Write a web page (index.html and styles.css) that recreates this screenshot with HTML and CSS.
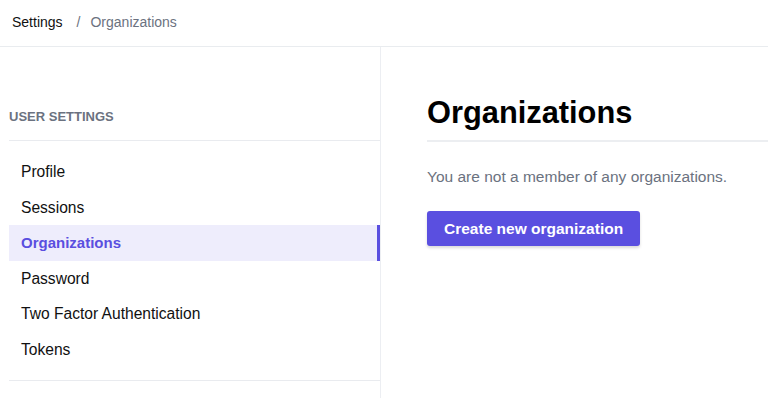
FILE: index.html
```html
<!DOCTYPE html>
<html lang="en">
<head>
  <meta charset="UTF-8">
  <meta name="viewport" content="width=device-width, initial-scale=1.0">
  <title>Organizations - Settings</title>
  <link rel="stylesheet" href="styles.css">
</head>
<body>
  <header class="barra">
    <span class="miga-actual">Settings</span>
    <span class="miga-sep">/</span>
    <span class="miga">Organizations</span>
  </header>

  <div class="contenido">
    <aside class="lateral">
      <h3 class="lateral-titulo">User Settings</h3>
      <nav class="menu">
        <a class="menu-item" href="#">Profile</a>
        <a class="menu-item" href="#">Sessions</a>
        <a class="menu-item activo" href="#">Organizations</a>
        <a class="menu-item" href="#">Password</a>
        <a class="menu-item" href="#">Two Factor Authentication</a>
        <a class="menu-item" href="#">Tokens</a>
      </nav>
    </aside>

    <main class="principal">
      <h1>Organizations</h1>
      <p class="vacio">You are not a member of any organizations.</p>
      <button class="btn" type="button">Create new organization</button>
    </main>
  </div>
</body>
</html>
```

FILE: styles.css
```css
html, body {
  height: 100%;
  overflow: hidden;
}
body {
  font-family: "Liberation Sans", Arial, Helvetica, sans-serif;
  margin: 0;
  background: #fff;
  color: #111;
}
.barra {
  height: 46px;
  border-bottom: 1px solid #e9ecef;
  display: flex;
  align-items: center;
  padding: 0 12px;
  font-size: 14px;
}
.miga-actual {
  color: #111;
  padding-bottom: 3px;
}
.miga-sep {
  color: #6b7280;
  margin: 0 10px 0 14px;
  padding-bottom: 3px;
}
.miga {
  color: #6b7280;
  padding-bottom: 3px;
}
.contenido {
  display: flex;
  height: calc(100% - 47px);
}
.lateral {
  box-sizing: border-box;
  width: 381px;
  padding-left: 9px;
  padding-top: 60px;
  border-right: 1px solid #eceef2;
  flex-shrink: 0;
}
.lateral-titulo {
  margin: 0;
  font-size: 13px;
  line-height: 20px;
  font-weight: bold;
  text-transform: uppercase;
  color: #6b7280;
  padding-bottom: 13px;
  border-bottom: 1px solid #e9ebef;
}
.menu {
  display: flex;
  flex-direction: column;
  padding: 13px 0;
  border-bottom: 1px solid #e9ebef;
}
.menu-item {
  display: block;
  height: 35.5px;
  line-height: 35.5px;
  padding-left: 12px;
  font-size: 15.6px;
  color: #111;
  text-decoration: none;
}
.menu-item.activo {
  background-color: #eeedfc;
  color: #5a4fe0;
  font-weight: bold;
  font-size: 15px;
  box-shadow: inset -3px 0 0 #5a4fe0;
}
.principal {
  flex: 1;
  padding-left: 46px;
  padding-top: 48px;
}
.principal h1 {
  margin: 0;
  font-size: 30.8px;
  line-height: 36px;
  font-weight: bold;
  color: #000;
  padding-bottom: 9px;
  border-bottom: 2px solid #eceef1;
}
.vacio {
  margin: 24px 0 0;
  font-size: 15.5px;
  line-height: 22px;
  color: #6b7280;
}
.btn {
  margin-top: 23px;
  background-color: #5a4fe0;
  color: #fff;
  font-family: inherit;
  font-size: 15.5px;
  font-weight: bold;
  height: 35px;
  padding: 0 17px;
  border: none;
  border-radius: 3px;
  box-shadow: 0 2px 3px rgba(0, 0, 0, 0.15);
  cursor: pointer;
}
```
